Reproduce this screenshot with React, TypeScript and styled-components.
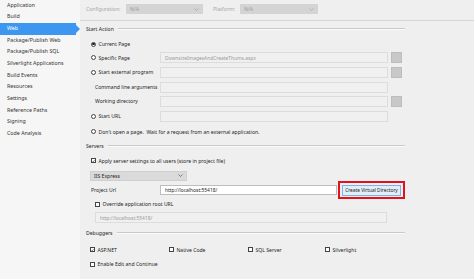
import React from 'react';
import styled, { createGlobalStyle, css } from 'styled-components';

const Global = createGlobalStyle`
  html, body { margin: 0; padding: 0; background: #efefef; }
  body { font-family: "Segoe UI", "Noto Sans", "Open Sans", sans-serif; }
  * { box-sizing: border-box; }
`;

const Frame = styled.div`
  display: flex;
  width: 474px;
  height: 279px;
  overflow: hidden;
  background: #efefef;
  font-size: 5.1px;
  color: #1e1e1e;
`;

const Sidebar = styled.nav`
  width: 80px;
  flex: none;
  background: #f6f6f6;
  display: flex;
  flex-direction: column;
  margin-top: -0.5px;
  font-size: 5.3px;
`;

const NavItem = styled.div<{ $active?: boolean }>`
  position: relative;
  height: 11.7px;
  line-height: 11.7px;
  width: 76px;
  padding-left: 7px;
  white-space: nowrap;
  color: #333;
  ${(p) =>
    p.$active &&
    css`
      background: #3d97f0;
      color: #fff;
      &::after {
        content: '';
        position: absolute;
        right: -4px;
        top: 50%;
        margin-top: -4px;
        border-left: 4px solid #3d97f0;
        border-top: 4px solid transparent;
        border-bottom: 4px solid transparent;
      }
    `}
`;

const Main = styled.main`
  flex: 1;
  display: flex;
  flex-direction: column;
`;

const TopBar = styled.div`
  height: 21px;
  flex: none;
  display: flex;
  align-items: center;
  padding-left: 6px;
  padding-bottom: 2px;
  border-bottom: 1px solid #d6d6d6;
`;

const DimLabel = styled.span<{ $w: number }>`
  width: ${(p) => p.$w}px;
  color: #a6a6a6;
  flex: none;
`;

const Select = styled.div<{ $w: number; $dim?: boolean }>`
  width: ${(p) => p.$w}px;
  height: 10px;
  flex: none;
  display: flex;
  align-items: center;
  justify-content: space-between;
  padding: 0 3px;
  background: ${(p) => (p.$dim ? '#d4d4d4' : '#dadada')};
  border: 1px solid ${(p) => (p.$dim ? '#d4d4d4' : '#cfcfcf')};
  color: ${(p) => (p.$dim ? '#9a9a9a' : '#222')};
  margin-right: ${(p) => (p.$dim ? 10 : 0)}px;
`;

const Chevron = styled.svg`
  width: 5px;
  height: 3px;
  flex: none;
`;

const Content = styled.div`
  display: flex;
  flex-direction: column;
  padding: 0 70px 0 6px;
`;

const Row = styled.div<{ $h: number; $indent?: number }>`
  height: ${(p) => p.$h}px;
  flex: none;
  display: flex;
  align-items: center;
  padding-left: ${(p) => p.$indent ?? 0}px;
  white-space: nowrap;
`;

const SectionTitle = styled.span`
  margin-right: 4px;
`;

const Rule = styled.div`
  flex: 1;
  height: 2px;
  border-top: 1px solid #c9c9c9;
  border-bottom: 1px solid #fbfbfb;
`;

const Option = styled.label<{ $w?: number }>`
  display: flex;
  align-items: center;
  gap: 2.5px;
  width: ${(p) => (p.$w ? `${p.$w}px` : 'auto')};
  flex: none;
`;

const Radio = styled.span<{ $on?: boolean }>`
  width: 5px;
  height: 5px;
  border-radius: 50%;
  border: 0.8px solid #444;
  background: #fff;
  flex: none;
  display: flex;
  align-items: center;
  justify-content: center;
  &::after {
    content: '';
    width: 2.4px;
    height: 2.4px;
    border-radius: 50%;
    background: ${(p) => (p.$on ? '#222' : 'transparent')};
  }
`;

const Box = styled.span`
  width: 5px;
  height: 5px;
  border: 0.8px solid #444;
  background: #fff;
  flex: none;
  display: flex;
  align-items: center;
  justify-content: center;
`;

const TextLabel = styled.span<{ $w: number }>`
  width: ${(p) => p.$w}px;
  flex: none;
`;

const Field = styled.div<{ $w: number; $white?: boolean }>`
  width: ${(p) => p.$w}px;
  height: ${(p) => (p.$white ? 10 : 11)}px;
  flex: none;
  display: flex;
  align-items: center;
  padding-left: 4px;
  background: ${(p) => (p.$white ? '#ffffff' : '#f0f0f0')};
  border: 1px solid ${(p) => (p.$white ? '#bdbdbd' : '#dcdcdc')};
  color: ${(p) => (p.$white ? '#222' : '#9a9a9a')};
  font-size: 4.9px;
`;

const Browse = styled.span`
  width: 11px;
  height: 11px;
  margin-left: 3px;
  flex: none;
  background: #c8c8c8;
  border: 1px solid #bdbdbd;
`;

const Highlight = styled.div`
  flex: none;
  margin-left: 1px;
  width: 67px;
  height: 18px;
  padding: 1px 2px;
  border: 2px solid #e3101e;
  display: flex;
  align-items: center;
`;

const Button = styled.button`
  width: 100%;
  height: 11px;
  padding: 0;
  font: inherit;
  font-size: 4.8px;
  color: #222;
  background: #e3eef9;
  border: 1px solid #7fb2e2;
  display: flex;
  align-items: center;
  justify-content: center;
  white-space: nowrap;
`;

const DebugGrid = styled.div`
  display: grid;
  grid-template-columns: 79px 79px 77px 79px;
  align-items: center;
`;

const Check = () => (
  <svg width="4" height="4" viewBox="0 0 4 4">
    <path d="M0.5 2 L1.6 3.1 L3.5 0.8" fill="none" stroke="#222" strokeWidth="0.7" />
  </svg>
);

const Down = ({ color }: { color: string }) => (
  <Chevron viewBox="0 0 5 3">
    <path d="M0.5 0.5 L2.5 2.5 L4.5 0.5" fill="none" stroke={color} strokeWidth="0.8" />
  </Chevron>
);

const navItems = [
  'Application',
  'Build',
  'Web',
  'Package/Publish Web',
  'Package/Publish SQL',
  'Silverlight Applications',
  'Build Events',
  'Resources',
  'Settings',
  'Reference Paths',
  'Signing',
  'Code Analysis',
];

export default function App() {
  return (
    <>
      <Global />
      <Frame>
        <Sidebar>
          {navItems.map((n) => (
            <NavItem key={n} $active={n === 'Web'}>
              {n}
            </NavItem>
          ))}
        </Sidebar>
        <Main>
          <TopBar>
            <DimLabel $w={40}>Configuration:</DimLabel>
            <Select $w={77} $dim>
              <span>N/A</span>
              <Down color="#a8a8a8" />
            </Select>
            <DimLabel $w={27}>Platform:</DimLabel>
            <Select $w={78} $dim>
              <span>N/A</span>
              <Down color="#a8a8a8" />
            </Select>
          </TopBar>
          <Content>
            <Row $h={16}>
              <SectionTitle>Start Action</SectionTitle>
              <Rule />
            </Row>
            <Row $h={14} $indent={5}>
              <Option>
                <Radio $on />
                Current Page
              </Option>
            </Row>
            <Row $h={13} $indent={5}>
              <Option $w={69}>
                <Radio />
                Specific Page
              </Option>
              <Field $w={228}>DownsizeImagesAndCreateThums.aspx</Field>
              <Browse />
            </Row>
            <Row $h={16} $indent={5}>
              <Option $w={69}>
                <Radio />
                Start external program
              </Option>
              <Field $w={228} />
              <Browse />
            </Row>
            <Row $h={14} $indent={9}>
              <TextLabel $w={65}>Command line arguments</TextLabel>
              <Field $w={228} />
            </Row>
            <Row $h={14} $indent={9}>
              <TextLabel $w={65}>Working directory</TextLabel>
              <Field $w={228} />
              <Browse />
            </Row>
            <Row $h={16} $indent={5}>
              <Option $w={69}>
                <Radio />
                Start URL
              </Option>
              <Field $w={228} />
            </Row>
            <Row $h={15} $indent={5}>
              <Option>
                <Radio />
                Don't open a page.&nbsp; Wait for a request from an external application.
              </Option>
            </Row>
            <Row $h={14}>
              <SectionTitle>Servers</SectionTitle>
              <Rule />
            </Row>
            <Row $h={15} $indent={5}>
              <Option>
                <Box>
                  <Check />
                </Box>
                Apply server settings to all users (store in project file)
              </Option>
            </Row>
            <Row $h={15} $indent={4}>
              <Select $w={97}>
                <span>IIS Express</span>
                <Down color="#666" />
              </Select>
            </Row>
            <Row $h={14} $indent={5}>
              <TextLabel $w={69}>Project Url</TextLabel>
              <Field $w={177} $white>
                http://localhost:55418/
              </Field>
              <Highlight>
                <Button>Create Virtual Directory</Button>
              </Highlight>
            </Row>
            <Row $h={14} $indent={9}>
              <Option>
                <Box />
                Override application root URL
              </Option>
            </Row>
            <Row $h={13} $indent={9}>
              <Field $w={292}>http://localhost:55418/</Field>
            </Row>
            <Row $h={18}>
              <SectionTitle>Debuggers</SectionTitle>
              <Rule />
            </Row>
            <Row $h={15} $indent={4}>
              <DebugGrid>
                <Option>
                  <Box>
                    <Check />
                  </Box>
                  ASP.NET
                </Option>
                <Option>
                  <Box />
                  Native Code
                </Option>
                <Option>
                  <Box />
                  SQL Server
                </Option>
                <Option>
                  <Box />
                  Silverlight
                </Option>
              </DebugGrid>
            </Row>
            <Row $h={14} $indent={4}>
              <Option>
                <Box />
                Enable Edit and Continue
              </Option>
            </Row>
          </Content>
        </Main>
      </Frame>
    </>
  );
}
